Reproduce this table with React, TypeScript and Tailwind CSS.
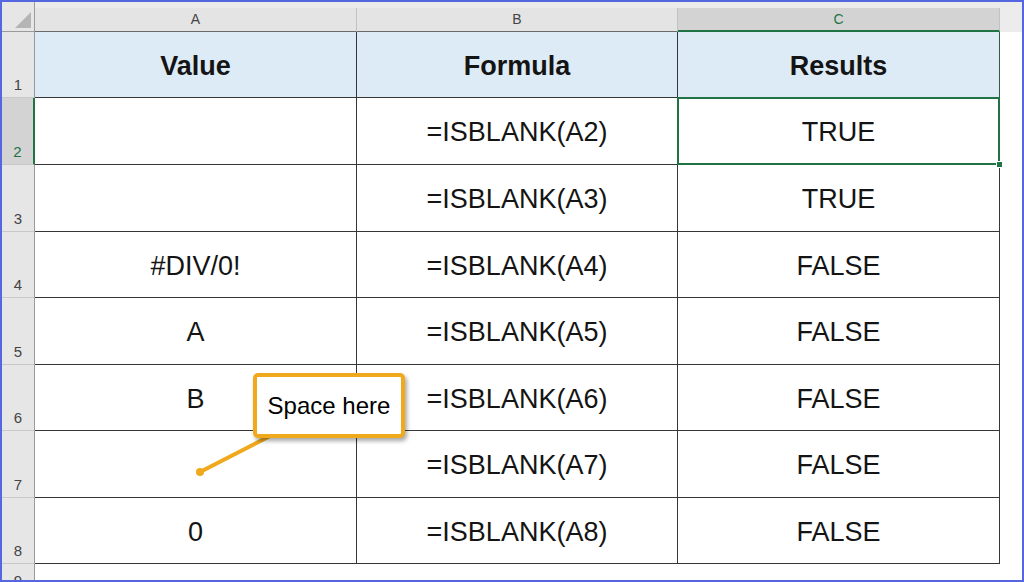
import React from "react";

type Row = {
  n: string;
  h: string;
  a: string;
  b: string;
  c: string;
};

const rows: Row[] = [
  { n: "2", h: "h-[67px]", a: "", b: "=ISBLANK(A2)", c: "TRUE" },
  { n: "3", h: "h-[67px]", a: "", b: "=ISBLANK(A3)", c: "TRUE" },
  { n: "4", h: "h-[66px]", a: "#DIV/0!", b: "=ISBLANK(A4)", c: "FALSE" },
  { n: "5", h: "h-[67px]", a: "A", b: "=ISBLANK(A5)", c: "FALSE" },
  { n: "6", h: "h-[66px]", a: "B", b: "=ISBLANK(A6)", c: "FALSE" },
  { n: "7", h: "h-[67px]", a: "", b: "=ISBLANK(A7)", c: "FALSE" },
  { n: "8", h: "h-[66px]", a: "0", b: "=ISBLANK(A8)", c: "FALSE" },
];

const cellBase =
  "flex items-center justify-center pt-[3px] border-r border-b border-[#363636] text-[27px] text-[#141414] box-border";

export default function App() {
  return (
    <div className="relative w-[1024px] h-[582px] box-border border-2 border-[#5566e0] bg-white overflow-hidden font-['Liberation_Sans',Arial,sans-serif]">
      {/* column header row */}
      <div className="flex h-[30px] bg-[#ebebeb]">
        <div className="w-[33px] shrink-0 box-border bg-[#e6e6e6] border-r border-b border-r-[#9a9a9a] border-b-[#9a9a9a] flex items-end justify-end pr-[3px] pb-[3px]">
          <svg width="16" height="16" viewBox="0 0 16 16">
            <polygon points="16,0 16,16 0,16" fill="#b5b5b5" />
          </svg>
        </div>
        <div className="w-[322px] shrink-0 mt-[6px] h-[24px] box-border bg-[#e4e4e4] border-r border-r-[#c2c2c2] border-b border-b-[#6a6a6a] flex items-center justify-center text-[14px] text-[#444]">
          A
        </div>
        <div className="w-[321px] shrink-0 mt-[6px] h-[24px] box-border bg-[#e4e4e4] border-r border-r-[#c2c2c2] border-b border-b-[#6a6a6a] flex items-center justify-center text-[14px] text-[#444]">
          B
        </div>
        <div className="w-[322px] shrink-0 mt-[6px] h-[24px] box-border bg-[#d3d3d3] border-r border-r-[#c2c2c2] border-b-2 border-b-[#217346] flex items-center justify-center text-[14px] text-[#217346]">
          C
        </div>
        <div className="flex-1 bg-[#ececec]" />
      </div>

      {/* row 1 header */}
      <div className="flex h-[66px]">
        <div className="w-[33px] shrink-0 box-border bg-[#e6e6e6] border-r border-r-[#9a9a9a] border-b border-b-[#c8c8c8] flex items-end justify-center pb-[1px] text-[15px] text-[#444]">
          1
        </div>
        <div className={`${cellBase} w-[322px] bg-[#ddebf7] font-bold`}>Value</div>
        <div className={`${cellBase} w-[321px] bg-[#ddebf7] font-bold`}>Formula</div>
        <div className={`${cellBase} w-[322px] bg-[#ddebf7] font-bold border-r-[#2f5e40]`}>Results</div>
        <div className="flex-1" />
      </div>

      {rows.map((r) => {
        const selected = r.n === "2";
        return (
          <div key={r.n} className={`flex ${r.h}`}>
            <div
              className={
                selected
                  ? "w-[33px] shrink-0 box-border bg-[#d3d3d3] border-r-2 border-r-[#217346] border-b border-b-[#c8c8c8] flex items-end justify-center pb-[1px] text-[15px] text-[#217346]"
                  : "w-[33px] shrink-0 box-border bg-[#e6e6e6] border-r border-r-[#9a9a9a] border-b border-b-[#c8c8c8] flex items-end justify-center pb-[1px] text-[15px] text-[#444]"
              }
            >
              {r.n}
            </div>
            <div className={`${cellBase} w-[322px]`}>{r.a}</div>
            <div className={`${cellBase} w-[321px]`}>{r.b}</div>
            <div className={`${cellBase} w-[322px] relative`}>
              {r.c}
              {selected && (
                <>
                  <div className="absolute -left-[1px] -top-[1px] -right-[1px] -bottom-[1px] border-2 border-[#217346] pointer-events-none" />
                  <div className="absolute -right-[4px] -bottom-[4px] w-[7px] h-[7px] bg-[#217346] border border-white z-10" />
                </>
              )}
            </div>
            <div className="flex-1" />
          </div>
        );
      })}

      {/* row 9 */}
      <div className="flex h-[20px]">
        <div className="w-[33px] shrink-0 box-border bg-[#e6e6e6] border-r border-r-[#9a9a9a] flex items-end justify-center text-[15px] text-[#444] leading-none">
          <span className="translate-y-[4px]">9</span>
        </div>
        <div className="flex-1" />
      </div>

      {/* callout pointer */}
      <svg
        className="absolute left-[188px] top-[428px]"
        width="90"
        height="50"
        viewBox="0 0 90 50"
      >
        <line x1="80" y1="6" x2="10" y2="42" stroke="#f0a91c" strokeWidth="4" strokeLinecap="round" />
        <circle cx="10" cy="42" r="4" fill="#f0a91c" />
      </svg>

      {/* callout box */}
      <div className="absolute left-[251px] top-[371px] w-[152px] h-[65px] box-border border-4 border-[#f0a91c] rounded-[5px] bg-white shadow-[2px_3px_4px_rgba(0,0,0,0.35)] flex items-center justify-center text-[24px] text-black">
        Space here
      </div>
    </div>
  );
}
